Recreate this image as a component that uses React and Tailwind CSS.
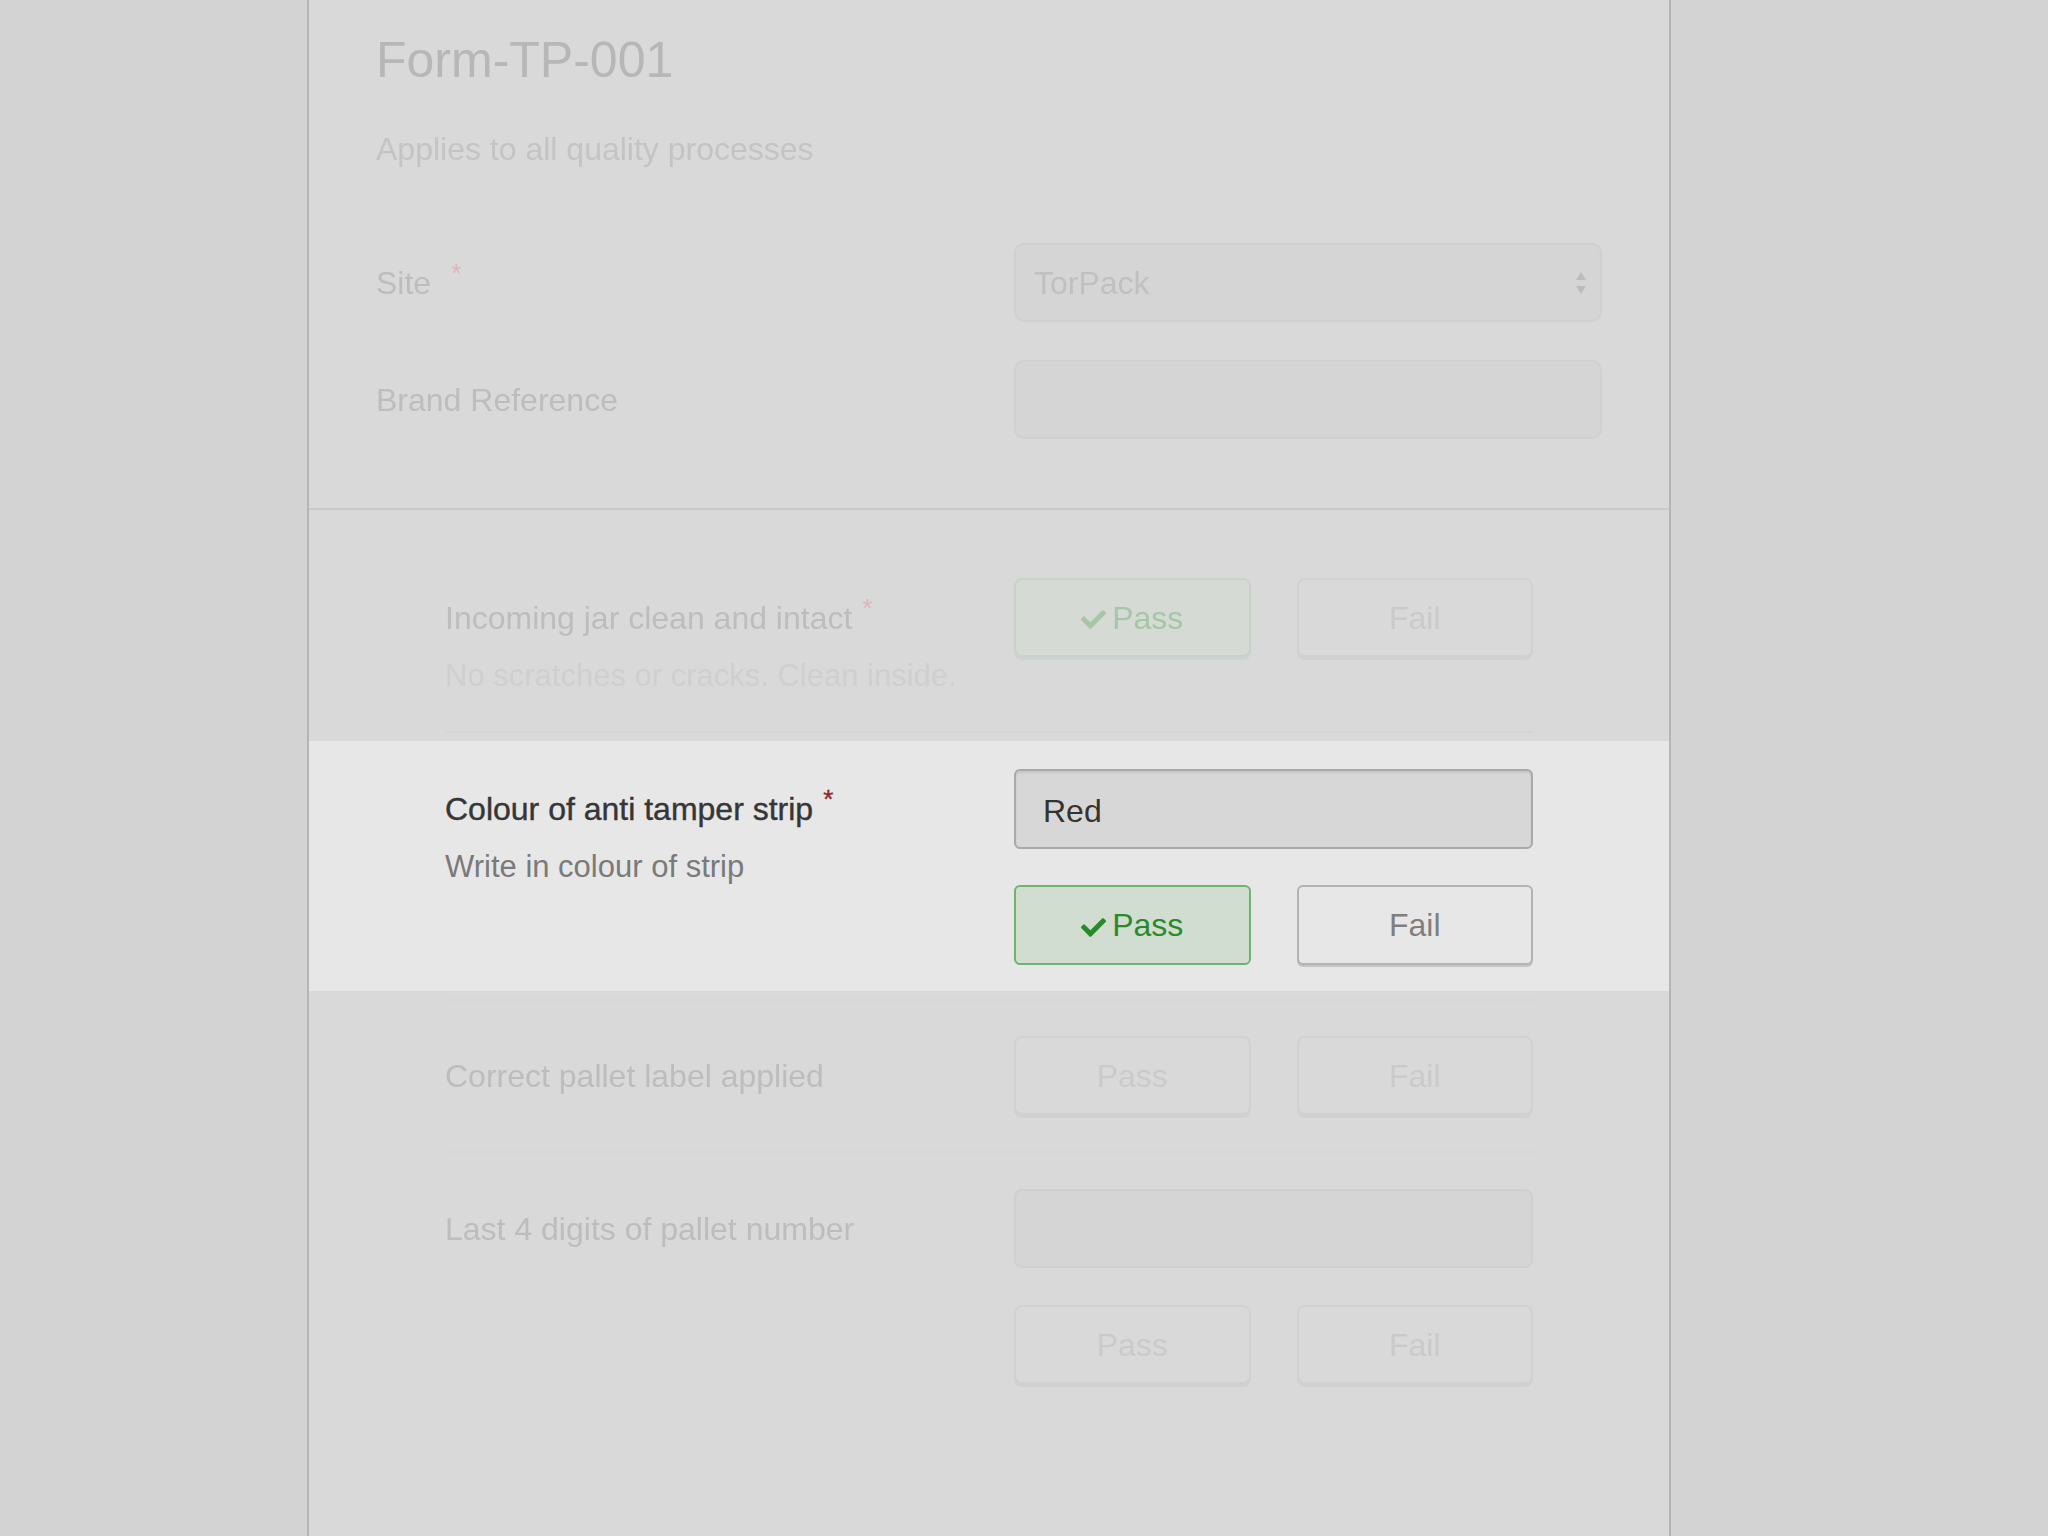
import { FaCheck } from 'react-icons/fa'

function Star({ dim, gap = 'ml-[10px]' }) {
  return (
    <span className={`${gap} align-super text-[26px] leading-none ${dim ? 'text-[#dcb4b8]' : 'text-[#c81818]'}`}>*</span>
  )
}

function DimButton({ children, selected }) {
  return (
    <div
      className={`h-[79px] flex items-center justify-center gap-[6px] rounded-[8px] border-2 text-[32px] ${
        selected
          ? 'bg-[#d5dad5] border-[#cad1ca] text-[#a6c6a6] shadow-[0_3px_0_#cfd3cf]'
          : 'bg-[#dad9da] border-[#d2d1d2] text-[#cacaca] shadow-[0_3px_0_#d2d1d2]'
      }`}
    >
      {selected && <FaCheck size={25} className="mt-[4px]" />}
      {children}
    </div>
  )
}

function Separator() {
  return <div className="mx-[136px] my-[8px] border-t-2 border-dotted border-[#d5d4d5]" />
}

export default function App() {
  return (
    <div className="min-h-[1536px] bg-[#d4d3d4] font-['Liberation_Sans',Arial,sans-serif]">
      <div className="ml-[307px] w-[1364px] min-h-[1536px] bg-[#dad9da] border-x-2 border-[#b6b5b6]">
        {/* header */}
        <div className="blur-[0.6px] px-[67px] pt-[32px] pb-[69px]">
          <h1 className="text-[50px] leading-[1.15] text-[#b7b7b7]">Form-TP-001</h1>
          <p className="mt-[41px] text-[32px] leading-[1.15] text-[#c4c4c4]">Applies to all quality processes</p>
          <div className="mt-[76px] flex flex-col gap-[38px]">
            <div className="flex items-center">
              <div className="w-[638px] text-[32px] text-[#bdbdbd]">
                Site<Star dim gap="ml-[20px]" />
              </div>
              <div className="w-[588px] h-[79px] rounded-[10px] bg-[#d6d5d6] border-2 border-[#d1d0d1] flex items-center justify-between pl-[18px] pr-[12px] text-[32px] text-[#c0c0c0]">
                <span>TorPack</span>
                <svg width="14" height="28" viewBox="0 0 14 28" className="text-[#bcbcbc]">
                  <path d="M7 3 L12 11 H2 Z" fill="currentColor" />
                  <path d="M7 25 L12 17 H2 Z" fill="currentColor" />
                </svg>
              </div>
            </div>
            <div className="flex items-center">
              <div className="w-[638px] text-[32px] text-[#bdbdbd]">Brand Reference</div>
              <div className="w-[588px] h-[79px] rounded-[10px] bg-[#d6d5d6] border-2 border-[#d1d0d1]" />
            </div>
          </div>
        </div>

        <div className="border-t-2 border-[#cbcacb] pt-[40px]">
          {/* row 1 */}
          <div className="blur-[0.6px] px-[136px] py-[28px] flex">
            <div className="w-[569px]">
              <div className="h-[79px] flex items-center text-[32px] text-[#bdbdbd]">
                <span>Incoming jar clean and intact<Star dim /></span>
              </div>
              <div className="h-[38px] flex items-center text-[31px] text-[#cfcfcf]">No scratches or cracks. Clean inside.</div>
            </div>
            <div className="w-[519px] grid grid-cols-2 gap-[46px] self-start">
              <DimButton selected>Pass</DimButton>
              <DimButton>Fail</DimButton>
            </div>
          </div>

          <Separator />

          {/* row 2 - focused */}
          <div className="bg-[#e8e7e8] px-[136px] pt-[28px] pb-[26px] flex">
            <div className="w-[569px]">
              <div className="h-[79px] flex items-center text-[32px] text-[#363636] [-webkit-text-stroke:0.4px_#363636]">
                <span>Colour of anti tamper strip<Star /></span>
              </div>
              <div className="h-[38px] flex items-center text-[31px] text-[#7a7a7a]">Write in colour of strip</div>
            </div>
            <div className="w-[519px] flex flex-col gap-[36px]">
              <div className="h-[80px] rounded-[6px] bg-[#d7d7d7] border-2 border-[#a9a9a9] shadow-[inset_0_2px_2px_rgba(0,0,0,0.08)] flex items-center pl-[27px] pt-[4px] text-[32px] text-[#333333]">
                Red
              </div>
              <div className="grid grid-cols-2 gap-[46px]">
                <div className="h-[80px] flex items-center justify-center gap-[6px] rounded-[6px] border-2 border-[#6db56d] bg-[#d2ddd2] text-[32px] text-[#2a8a2a]">
                  <FaCheck size={25} className="mt-[4px]" />
                  Pass
                </div>
                <div className="h-[80px] flex items-center justify-center rounded-[6px] border-2 border-[#b3b3b3] bg-[#e8e7e8] text-[32px] text-[#7f7f7f] shadow-[0_2px_0_#c4c4c4]">
                  Fail
                </div>
              </div>
            </div>
          </div>

          <Separator />

          {/* row 3 */}
          <div className="blur-[0.6px] px-[136px] pt-[27px] pb-[28px] flex">
            <div className="w-[569px] h-[79px] flex items-center text-[32px] text-[#bdbdbd]">Correct pallet label applied</div>
            <div className="w-[519px] grid grid-cols-2 gap-[46px]">
              <DimButton>Pass</DimButton>
              <DimButton>Fail</DimButton>
            </div>
          </div>

          <Separator />

          {/* row 4 */}
          <div className="blur-[0.6px] px-[136px] pt-[28px] pb-[28px] flex">
            <div className="w-[569px] h-[79px] flex items-center text-[32px] text-[#bdbdbd]">Last 4 digits of pallet number</div>
            <div className="w-[519px] flex flex-col gap-[37px]">
              <div className="h-[79px] rounded-[8px] bg-[#d6d5d6] border-2 border-[#d1d0d1]" />
              <div className="grid grid-cols-2 gap-[46px]">
                <DimButton>Pass</DimButton>
                <DimButton>Fail</DimButton>
              </div>
            </div>
          </div>
        </div>
      </div>
    </div>
  )
}
